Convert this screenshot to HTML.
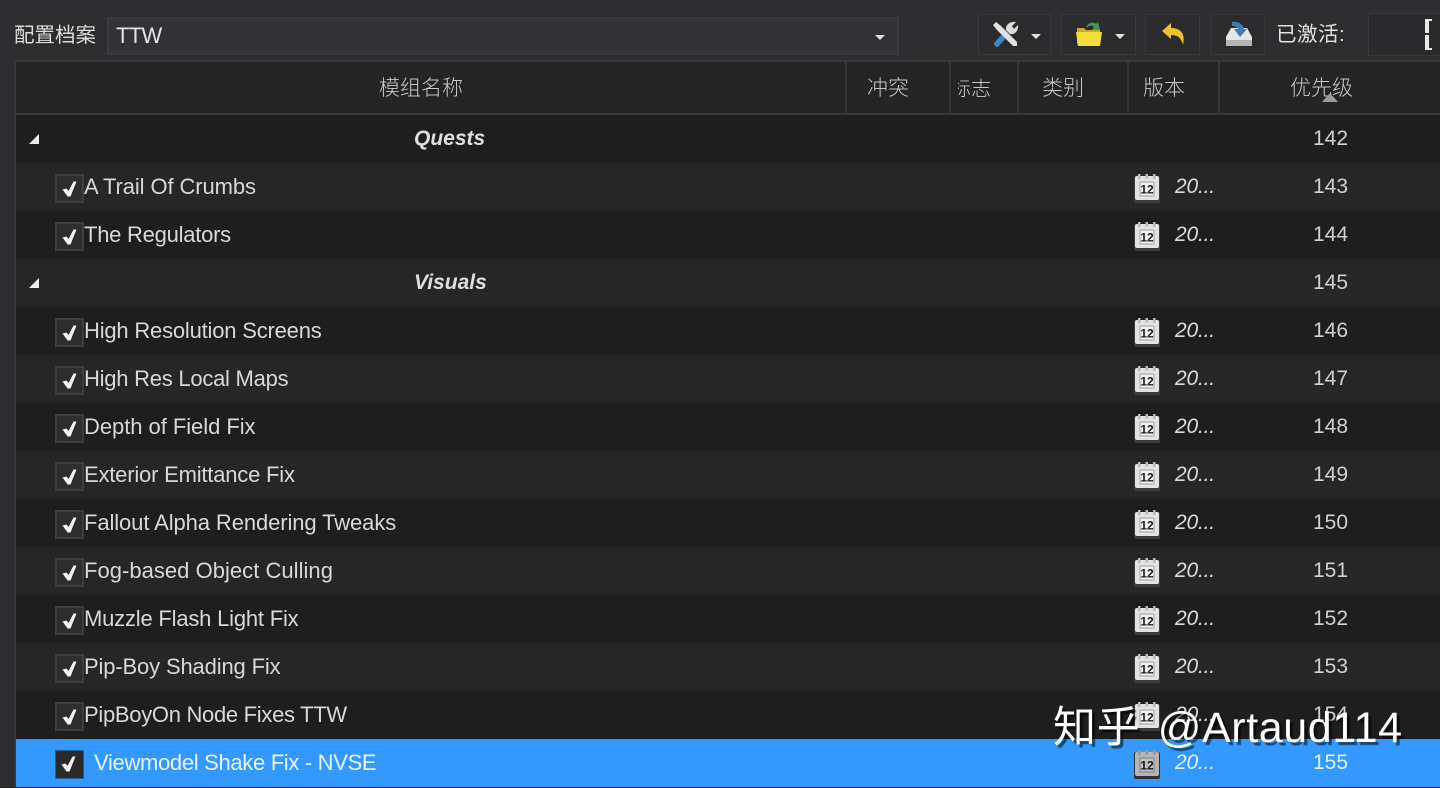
<!DOCTYPE html>
<html><head><meta charset="utf-8"><style>
html,body{margin:0;padding:0;background:#2d2d30;width:1440px;height:788px;overflow:hidden}
*{box-sizing:border-box}
body{font-family:"Liberation Sans","Noto Sans CJK SC",sans-serif;color:#dcdcdc;position:relative}
.a{position:absolute;white-space:nowrap}
.btn{position:absolute;top:14px;height:41px;border:1px solid #38383b;background:#2b2b2e}
.arr{position:absolute;width:0;height:0;border-left:5px solid transparent;border-right:5px solid transparent;border-top:5px solid #e0e0e0}
.hd{position:absolute;top:87px;transform:translateY(-50%);font-size:21px;color:#c8c8c8;font-weight:300;white-space:nowrap}
.sep{position:absolute;top:62px;width:2px;height:51px;background:#363638}
.r{position:absolute;left:16px;width:1424px;height:48px}
.d{background:#1e1e1f}.l{background:#262627}.s{background:#3399ff}
.cb{position:absolute;left:39px;top:11px;width:29px;height:29px;background:#2e2e30;border:2px solid #3e3e41}
.cb svg{position:absolute;left:4px;top:4px}
.n{position:absolute;left:68px;top:0;line-height:47px;font-size:22px;color:#d8d8d8;letter-spacing:-.1px;white-space:nowrap}
.g{position:absolute;left:398px;top:0;line-height:47px;font-size:21px;font-weight:bold;font-style:italic;color:#dedede;white-space:nowrap}
.t{position:absolute;left:13px;top:19px;width:0;height:0;border-bottom:10px solid #eee;border-left:10px solid transparent}
.c{position:absolute;left:1118px;top:10px}
.v{position:absolute;left:1159px;top:0;line-height:47px;font-size:21px;font-style:italic;color:#dcdcdc;letter-spacing:-.2px}
.p{position:absolute;left:1297px;top:0;line-height:47px;font-size:21px;color:#d0d0d0}
.s .n{left:78px;color:#e8f4ff;letter-spacing:-.32px}.s .v,.s .p{color:#e3f1ff}
.wm{position:absolute;left:1053px;top:700px;font-size:43px;line-height:56px;color:#fff;text-shadow:3px 3px 1px rgba(0,0,0,.55);white-space:nowrap;letter-spacing:.6px}
</style></head><body>
<svg width="0" height="0" style="position:absolute"><defs>
<symbol id="ck" viewBox="0 0 18 18"><path d="M1.5 9.5 L5.5 8.5 L7.5 11 L12.5 1.5 L15.5 1.5 L9.5 16.5 L6.5 16.5 Z" fill="#f2f2f2"/></symbol>
<symbol id="cal" viewBox="0 0 26 30"><rect x="0" y="3" width="26" height="27" rx="2" fill="#3c3c3c"/><rect x="1" y="3" width="24" height="24" rx="2" fill="#e2e2e2"/><rect x="4" y="1" width="2.5" height="5" fill="#bbb"/><rect x="11.5" y="1" width="2.5" height="5" fill="#bbb"/><rect x="19" y="1" width="2.5" height="5" fill="#bbb"/><rect x="6" y="9" width="14" height="14" fill="#f0f0f0" stroke="#a0a0a0" stroke-width="1"/><text x="13" y="20.5" font-family="Liberation Sans" font-weight="bold" font-size="12" text-anchor="middle" fill="#222">12</text></symbol>
</defs></svg>

<div class="a" style="left:14px;top:21px;font-size:20.5px;line-height:30px;color:#dcdcdc">配置档案</div>
<div class="a" style="left:107px;top:17px;width:792px;height:38px;background:#333337;border:2px solid #3a3a3e"></div>
<div class="a" style="left:116px;top:21px;font-size:22px;line-height:30px;color:#e4e4e4;letter-spacing:-.7px">TTW</div>
<div class="arr" style="left:875px;top:35px"></div>

<div class="btn" style="left:978px;width:73px"></div>
<svg class="a" style="left:992px;top:21px" width="27" height="27" viewBox="0 0 27 27"><path d="M2 22 L12 11 L16 15 L6 26 Q2 26 2 22 Z" fill="#3f84c8"/><path d="M1 4 L4 1 L9 5 L25 21 L25 25 L21 25 L5 9 Z" fill="#e2e2e2"/><path d="M14 9 C13 4 18 0 24 1 L20 5 L22 8 L26 4 C27 9 23 14 18 13 Z" fill="#dcdcdc"/></svg>
<div class="arr" style="left:1031px;top:34px"></div>

<div class="btn" style="left:1061px;width:75px"></div>
<svg class="a" style="left:1075px;top:20px" width="28" height="28" viewBox="0 0 28 28"><path d="M2 8 L9 8 L11 10 L25 10 L25 24 L2 24 Z" fill="#c2ab2e"/><path d="M1 12 L27 12 L25 26 L3 26 Z" fill="#f4dc3c"/><path d="M11 8 C12 3 18 1 21 4 L23 2 L25 10 L17 10 L19 7 C17 5 14 5 11 8 Z" fill="#3d9a4e"/></svg>
<div class="arr" style="left:1115px;top:34px"></div>

<div class="btn" style="left:1145px;width:55px"></div>
<svg class="a" style="left:1161px;top:21px" width="26" height="26" viewBox="0 0 26 26"><path d="M1 10 L10 2 L10 7 C18 7 25 11 22 24 C20 17 17 14 10 14 L10 18 Z" fill="#e8c22e"/></svg>

<div class="btn" style="left:1211px;width:54px"></div>
<svg class="a" style="left:1225px;top:20px" width="28" height="28" viewBox="0 0 28 28"><path d="M1 17 L6 8 L22 8 L27 17 L27 26 L1 26 Z" fill="#e6e6e6"/><rect x="1" y="20" width="26" height="6" fill="#b4b4b4"/><path d="M7 2 C13 1 18 4 19 9 L22 9 L15 17 L9 9 L13 9 C12 7 10 6 7 6 Z" fill="#3e7db8"/></svg>

<div class="a" style="left:1276px;top:20px;font-size:20.5px;line-height:30px;color:#e2e2e2;letter-spacing:.5px">已激活:</div>
<div class="a" style="left:1368px;top:13px;width:80px;height:43px;border:1px solid #38383b;background:#2a2a2c"></div>
<div class="a" style="left:1425px;top:19px;width:7px;height:14px;border-left:4px solid #e8e8e8;border-top:2px solid #e8e8e8"></div>
<div class="a" style="left:1425px;top:35px;width:7px;height:15px;border-left:4px solid #e8e8e8;border-bottom:2px solid #e8e8e8"></div>

<div class="a" style="left:14px;top:60px;width:1426px;height:728px;background:#252526;border-left:2px solid #38383a;border-top:2px solid #38383a"></div>
<div class="a" style="left:16px;top:62px;width:1424px;height:51px;background:#242425"></div>
<div class="a" style="left:16px;top:113px;width:1424px;height:2px;background:#38383a"></div>
<div class="sep" style="left:845px"></div><div class="sep" style="left:949px"></div><div class="sep" style="left:1017px"></div><div class="sep" style="left:1127px"></div><div class="sep" style="left:1218px"></div>
<div class="hd" style="left:379px">模组名称</div>
<div class="hd" style="left:867px">冲突</div>
<div class="hd" style="left:951px;font-size:20px;clip-path:inset(0 0 0 7px)">标志</div>
<div class="hd" style="left:1042px">类别</div>
<div class="hd" style="left:1143px">版本</div>
<div class="hd" style="left:1290px">优先级</div>
<div class="a" style="left:1322px;top:93px;width:0;height:0;border-left:8px solid transparent;border-right:8px solid transparent;border-bottom:9px solid #9a9a9a"></div>

<div class="r d" style="top:115px"><div class="t"></div><div class="g">Quests</div><div class="p">142</div></div>
<div class="r l" style="top:163px"><div class="cb"><svg width="18" height="18"><use href="#ck"/></svg></div><div class="n">A Trail Of Crumbs</div><svg class="c" width="26" height="30"><use href="#cal"/></svg><div class="v">20...</div><div class="p">143</div></div>
<div class="r d" style="top:211px"><div class="cb"><svg width="18" height="18"><use href="#ck"/></svg></div><div class="n" style="letter-spacing:-.25px">The Regulators</div><svg class="c" width="26" height="30"><use href="#cal"/></svg><div class="v">20...</div><div class="p">144</div></div>
<div class="r l" style="top:259px"><div class="t"></div><div class="g">Visuals</div><div class="p">145</div></div>
<div class="r d" style="top:307px"><div class="cb"><svg width="18" height="18"><use href="#ck"/></svg></div><div class="n" style="letter-spacing:-.2px">High Resolution Screens</div><svg class="c" width="26" height="30"><use href="#cal"/></svg><div class="v">20...</div><div class="p">146</div></div>
<div class="r l" style="top:355px"><div class="cb"><svg width="18" height="18"><use href="#ck"/></svg></div><div class="n" style="letter-spacing:-.25px">High Res Local Maps</div><svg class="c" width="26" height="30"><use href="#cal"/></svg><div class="v">20...</div><div class="p">147</div></div>
<div class="r d" style="top:403px"><div class="cb"><svg width="18" height="18"><use href="#ck"/></svg></div><div class="n" style="letter-spacing:-.05px">Depth of Field Fix</div><svg class="c" width="26" height="30"><use href="#cal"/></svg><div class="v">20...</div><div class="p">148</div></div>
<div class="r l" style="top:451px"><div class="cb"><svg width="18" height="18"><use href="#ck"/></svg></div><div class="n" style="letter-spacing:-.2px">Exterior Emittance Fix</div><svg class="c" width="26" height="30"><use href="#cal"/></svg><div class="v">20...</div><div class="p">149</div></div>
<div class="r d" style="top:499px"><div class="cb"><svg width="18" height="18"><use href="#ck"/></svg></div><div class="n">Fallout Alpha Rendering Tweaks</div><svg class="c" width="26" height="30"><use href="#cal"/></svg><div class="v">20...</div><div class="p">150</div></div>
<div class="r l" style="top:547px"><div class="cb"><svg width="18" height="18"><use href="#ck"/></svg></div><div class="n" style="letter-spacing:.03px">Fog-based Object Culling</div><svg class="c" width="26" height="30"><use href="#cal"/></svg><div class="v">20...</div><div class="p">151</div></div>
<div class="r d" style="top:595px"><div class="cb"><svg width="18" height="18"><use href="#ck"/></svg></div><div class="n" style="letter-spacing:-.2px">Muzzle Flash Light Fix</div><svg class="c" width="26" height="30"><use href="#cal"/></svg><div class="v">20...</div><div class="p">152</div></div>
<div class="r l" style="top:643px"><div class="cb"><svg width="18" height="18"><use href="#ck"/></svg></div><div class="n" style="letter-spacing:-.15px">Pip-Boy Shading Fix</div><svg class="c" width="26" height="30"><use href="#cal"/></svg><div class="v">20...</div><div class="p">153</div></div>
<div class="r d" style="top:691px"><div class="cb"><svg width="18" height="18"><use href="#ck"/></svg></div><div class="n" style="letter-spacing:-.3px">PipBoyOn Node Fixes TTW</div><svg class="c" width="26" height="30"><use href="#cal"/></svg><div class="v">20...</div><div class="p">154</div></div>
<div class="r s" style="top:739px"><div class="cb" style="background:#2a2a2d;border:1px solid #1f5f9c"><svg width="18" height="18"><use href="#ck"/></svg></div><div class="n">Viewmodel Shake Fix - NVSE</div><svg class="c" width="26" height="30" style="filter:brightness(.8)"><use href="#cal"/></svg><div class="v">20...</div><div class="p">155</div></div>
<div class="a" style="left:0;top:787px;width:1440px;height:1px;background:#1e1e1f"></div>

<div class="wm">知乎 <span style="margin-left:5px">@Artaud114</span></div>
</body></html>
